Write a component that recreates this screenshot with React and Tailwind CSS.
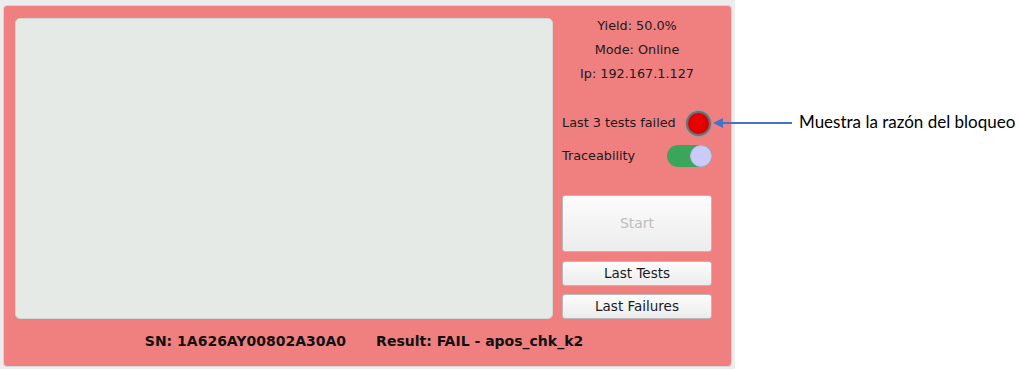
import React from "react";

function Btn({ children, className = "", disabled }) {
  return (
    <div
      className={
        "flex items-center justify-center rounded-[3px] border border-[#b9b9b9] bg-gradient-to-b from-[#fcfcfc] to-[#ececec] text-[13.5px] " +
        (disabled ? "text-[#bdbdbd] " : "text-[#1a1a1a] ") +
        className
      }
    >
      {children}
    </div>
  );
}

export default function App() {
  return (
    <div
      className="relative w-[1020px] h-[369px] bg-white"
      style={{ fontFamily: '"DejaVu Sans", sans-serif' }}
    >
      <div className="w-[735px] h-[369px] bg-[#ededed] pt-[5px] pl-[3px]">
        <div className="w-[729px] h-[362px] rounded-[4px] border border-[#d6d6d6] bg-[#f08080] flex flex-col pt-[12px] pl-[11px]">
          <div className="flex gap-[9px]">
            <div className="w-[538px] h-[301px] rounded-[5px] border border-[#d2d6d3] bg-[#e5eae6]" />
            <div className="w-[150px] h-[301px] flex flex-col text-[12.8px] text-[#1a1a1a]">
              <div className="-mt-1 flex flex-col items-center">
                <div className="h-6 leading-6">Yield: 50.0%</div>
                <div className="h-6 leading-6">Mode: Online</div>
                <div className="h-6 leading-6">Ip: 192.167.1.127</div>
              </div>
              <div className="mt-[24px] h-[26px] flex items-center justify-between pr-[1px]">
                <span>Last 3 tests failed</span>
                <div className="w-[25px] h-[25px] rounded-full bg-[#6e6e6e] p-[2px] shadow-[0_0_0_1px_#9a9a9a]">
                  <div className="w-full h-full rounded-full bg-[radial-gradient(circle_at_45%_40%,#f00000,#d00000)]" />
                </div>
              </div>
              <div className="mt-[9px] h-[22px] flex items-center justify-between">
                <span>Traceability</span>
                <div className="w-[45px] h-[22px] rounded-full bg-[#3ca55c] relative">
                  <div className="absolute right-0 top-0 w-[22px] h-[22px] rounded-full bg-[#cbcbfb] border border-[#b9b9e6]" />
                </div>
              </div>
              <div className="mt-auto flex flex-col">
                <Btn disabled className="h-[57px] text-[14px]">Start</Btn>
                <Btn className="h-[25px] mt-[9px]">Last Tests</Btn>
                <Btn className="h-[25px] mt-[8px]">Last Failures</Btn>
              </div>
            </div>
          </div>
          <div className="flex-1 flex items-center justify-center gap-[30px] font-bold text-[14px] text-[#111] pr-[18px] pb-[2px]">
            <span>SN: 1A626AY00802A30A0</span>
            <span>Result: FAIL - apos_chk_k2</span>
          </div>
        </div>
      </div>
      <svg
        className="absolute left-[712px] top-[117px]"
        width="82"
        height="12"
        viewBox="0 0 82 12"
      >
        <line x1="8" y1="6" x2="80" y2="6" stroke="#4472c4" strokeWidth="2" />
        <polygon points="1,6 11,1 11,11" fill="#4472c4" />
      </svg>
      <div
        className="absolute left-[799px] top-[112px] text-[17px] leading-5 text-black"
        style={{ fontFamily: '"Lato", "Open Sans", sans-serif' }}
      >
        Muestra la razón del bloqueo
      </div>
    </div>
  );
}
